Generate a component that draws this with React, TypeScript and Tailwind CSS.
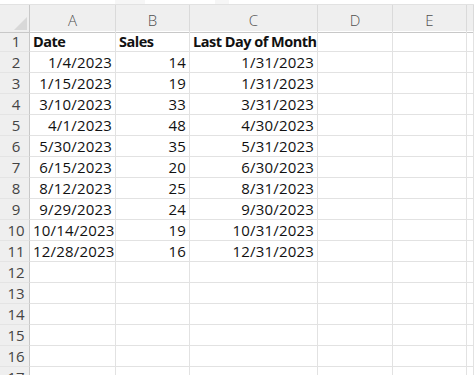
const cols = ['A', 'B', 'C', 'D', 'E', '']

const rows: [string, string, string][] = [
  ['1/4/2023', '14', '1/31/2023'],
  ['1/15/2023', '19', '1/31/2023'],
  ['3/10/2023', '33', '3/31/2023'],
  ['4/1/2023', '48', '4/30/2023'],
  ['5/30/2023', '35', '5/31/2023'],
  ['6/15/2023', '20', '6/30/2023'],
  ['8/12/2023', '25', '8/31/2023'],
  ['9/29/2023', '24', '9/30/2023'],
  ['10/14/2023', '19', '10/31/2023'],
  ['12/28/2023', '16', '12/31/2023'],
]

const grid = 'grid grid-cols-[30px_86px_74px_128px_75px_74px_1fr]'

function Cell({ children, right, bold }: { children?: React.ReactNode; right?: boolean; bold?: boolean }) {
  return (
    <div
      className={`h-[21px] border-r border-b border-[#e2e2e2] px-[3px] leading-[21px] whitespace-nowrap text-[#111] ${
        right ? 'text-right tracking-[0.2px]' : 'text-left'
      } ${bold ? 'text-[14.5px] font-bold tracking-[-0.5px]' : ''}`}
    >
      {children}
    </div>
  )
}

function RowHead({ n }: { n: number }) {
  return (
    <div className="h-[21px] border-r border-b border-r-[#c8c8c8] border-b-[#e4e4e4] bg-[#efefef] pl-[3px] text-center leading-[21px] text-[#444]">
      {n}
    </div>
  )
}

function App() {
  const header = ['Date', 'Sales', 'Last Day of Month']
  return (
    <div className="h-[375px] w-[474px] overflow-hidden bg-white text-[15px]" style={{ fontFamily: '"Open Sans", sans-serif' }}>
      {/* formula bar edge */}
      <div className="flex h-[5px] border-b border-[#e2e2e2] bg-white">
        <div className="w-[115px]" />
        <div className="w-[30px] bg-[#f6f6f6]" />
        <div className="w-[70px]" />
        <div className="w-[14px] bg-[#f6f6f6]" />
      </div>
      {/* column headers */}
      <div className={`${grid} h-[26px] bg-[#efefef]`}>
        <div className="relative border-r border-b border-[#c8c8c8]">
          <svg className="absolute right-[2px] bottom-[2px]" width="13" height="13" viewBox="0 0 13 13">
            <polygon points="13,0 13,13 0,13" fill="#d8d8d8" />
          </svg>
        </div>
        {cols.map((c, i) => (
          <div key={i} className="flex items-center justify-center border-r border-b border-r-[#dadada] border-b-[#c8c8c8] pt-[4px] font-light text-[#505050]">
            {c}
          </div>
        ))}
      </div>
      {/* row 1 */}
      <div className={grid}>
        <RowHead n={1} />
        {header.map((h) => (
          <Cell key={h} bold>
            {h}
          </Cell>
        ))}
        <Cell />
        <Cell />
        <Cell />
      </div>
      {rows.map((r, i) => (
        <div key={i} className={grid}>
          <RowHead n={i + 2} />
          {r.map((v, j) => (
            <Cell key={j} right>
              {v}
            </Cell>
          ))}
          <Cell />
          <Cell />
          <Cell />
        </div>
      ))}
      {[12, 13, 14, 15, 16, 17].map((n) => (
        <div key={n} className={grid}>
          <RowHead n={n} />
          <Cell />
          <Cell />
          <Cell />
          <Cell />
          <Cell />
          <Cell />
        </div>
      ))}
    </div>
  )
}

export default App
